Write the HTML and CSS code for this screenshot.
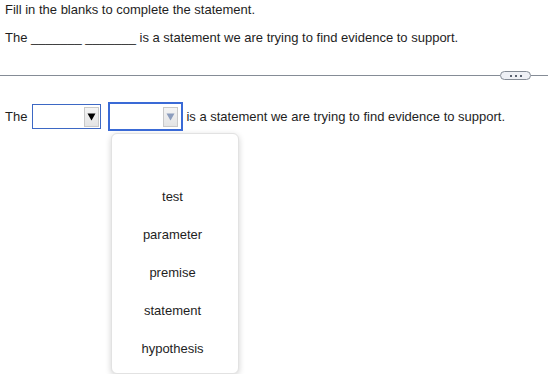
FILE: index.html
```html
<!DOCTYPE html>
<html>
<head>
<meta charset="utf-8">
<link rel="stylesheet" href="styles.css">
</head>
<body>
<div class="page">
  <p class="prompt">Fill in the blanks to complete the statement.</p>
  <p class="stmt">The <span class="blank">_______</span> <span class="blank">_______</span> is a statement we are trying to find evidence to support.</p>
  <div class="divider">
    <span class="rule"></span>
    <span class="pill"><i></i><i></i><i></i></span>
    <span class="rule tail"></span>
  </div>
  <div class="answer">
    <span class="word">The</span>
    <div class="select">
      <div class="btn"><svg width="9" height="9" viewBox="0 0 9 9"><path d="M0.5 1.5h8L4.5 8.5z" fill="#000"/></svg></div>
    </div>
    <div class="select focused">
      <div class="btn"><svg width="9" height="9" viewBox="0 0 9 9"><path d="M0.5 1.5h8L4.5 8.5z" fill="#8c9dbd"/></svg></div>
    </div>
    <span class="word">is a statement we are trying to find evidence to support.</span>
  </div>
  <div class="menu">
    <div class="item">&nbsp;</div>
    <div class="item">test</div>
    <div class="item">parameter</div>
    <div class="item">premise</div>
    <div class="item">statement</div>
    <div class="item">hypothesis</div>
  </div>
</div>
</body>
</html>
```

FILE: styles.css
```css
html, body {
  margin: 0;
  padding: 0;
  background: #fff;
}
body {
  font-family: "Liberation Sans", Arial, sans-serif;
  font-size: 13px;
  color: #1e1e1e;
}
.page {
  padding: 2px 0 0 5px;
}
.prompt {
  margin: 0;
  line-height: 15px;
}
.stmt {
  margin: 13px 0 0 0;
  line-height: 15px;
}
.divider {
  display: flex;
  align-items: center;
  margin: 26px 0 0 -5px;
  height: 9px;
}
.rule {
  flex: 1;
  height: 1px;
  background: #858c96;
}
.rule.tail {
  flex: 0 0 17px;
}
.pill {
  width: 29px;
  height: 7px;
  border: 1px solid #858c96;
  border-radius: 5px;
  background: #eef0f5;
  display: flex;
  justify-content: center;
  align-items: center;
  gap: 3px;
}
.pill i {
  width: 2px;
  height: 2px;
  background: #5a6270;
  display: block;
}
.answer {
  display: flex;
  align-items: center;
  margin-top: 22px;
  height: 29px;
}
.word {
  line-height: 15px;
}
.select {
  box-sizing: border-box;
  width: 69px;
  height: 25px;
  border: 1px solid #3d68c4;
  margin-left: 5px;
  display: flex;
  justify-content: flex-end;
  align-items: center;
  padding-right: 1px;
  background: #fff;
}
.select.focused {
  width: 75px;
  height: 29px;
  border: 2px solid #3a6ad6;
  margin-left: 7px;
  margin-right: 3px;
  padding-right: 3px;
}
.btn {
  box-sizing: border-box;
  width: 15px;
  height: 20px;
  border: 1px solid #c9c9c9;
  background: linear-gradient(#f4f4f4, #e4e4e4);
  display: flex;
  align-items: center;
  justify-content: center;
}
.menu {
  margin: 2px 0 0 106px;
  width: 128px;
  box-sizing: border-box;
  padding: 6px 5px 5px 0;
  background: #fff;
  border: 1px solid #e2e2e2;
  border-radius: 6px;
  box-shadow: 0 2px 6px rgba(0,0,0,0.18);
}
.item {
  height: 38px;
  line-height: 38px;
  text-align: center;
}
```
